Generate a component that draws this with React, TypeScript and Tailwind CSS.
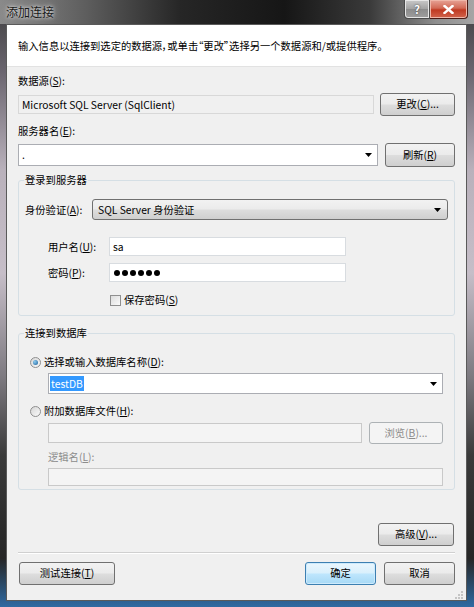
import React from 'react'

const font = "font-['Noto_Sans_CJK_SC',sans-serif]"

const U = ({ children }: { children: React.ReactNode }) => <span className="underline underline-offset-1">{children}</span>

const Arrow = () => (
  <svg width="7" height="4" viewBox="0 0 7 4" className="shrink-0">
    <path d="M0 0h7L3.5 4z" fill="#000" />
  </svg>
)

type BtnProps = { children: React.ReactNode; w: string; h?: string; primary?: boolean; disabled?: boolean }

const WinButton = ({ children, w, h = 'h-[23px]', primary, disabled }: BtnProps) => {
  let cls = 'border-[#707070] bg-[linear-gradient(#f2f2f2_0%,#ebebeb_48%,#dddddd_52%,#cfcfcf_100%)] text-black'
  if (primary) cls = 'border-[#3c7fb1] bg-[linear-gradient(#eaf6fd_0%,#d9f0fc_48%,#bee6fd_52%,#a7d9f5_100%)] text-black shadow-[inset_0_0_0_1px_#cdeafc]'
  if (disabled) cls = 'border-[#adb2b5] bg-[#f4f4f4] text-[#8c8c8c]'
  return (
    <button className={`${w} ${h} shrink-0 rounded-[3px] border text-[10.3px] leading-none flex items-center justify-center ${cls}`}>
      {children}
    </button>
  )
}

const Checkbox = () => (
  <span className="w-[11px] h-[11px] border border-[#8f8f8f] bg-[linear-gradient(135deg,#dcdcdc,#fbfbfb)] shrink-0" />
)

const Radio = ({ checked }: { checked?: boolean }) => (
  <span className="w-[11px] h-[11px] rounded-full border border-[#8f8f8f] bg-[linear-gradient(135deg,#d6d6d6,#fafafa)] flex items-center justify-center shrink-0">
    {checked && <span className="w-[5px] h-[5px] rounded-full bg-[radial-gradient(circle_at_35%_35%,#8ccbf0,#1b5f99)]" />}
  </span>
)

export default function App() {
  return (
    <div className={`${font} w-[474px] h-[607px] flex flex-col bg-[linear-gradient(#3d3d3d_0%,#6b6670_12%,#b9b1bb_28%,#c6bec8_45%,#7d7a80_62%,#3a3a3a_75%,#262626_92%,#2f6aa2_100%)] select-none [font-feature-settings:'palt']`}>
      {/* title bar */}
      <div className="h-[24px] flex items-start justify-between bg-[linear-gradient(to_right,#8a8a8a_0%,#5e5e5e_18%,#262626_38%,#161616_60%,#3a3a3a_78%,#8e8e8e_92%,#a5a5a5_100%)]">
        <span className="text-[12px] leading-none text-[#1a1a1a] pl-[6px] pt-[6px] [text-shadow:0_0_6px_#d8d8d8,0_0_3px_#e6e6e6]">添加连接</span>
        <div className="flex mr-[6px]">
          <div className="w-[26px] h-[19px] rounded-bl-[4px] border border-t-0 border-[#4b4b4b] bg-[linear-gradient(#c9c9c9_0%,#a3a3a3_48%,#8c8c8c_52%,#9e9e9e_100%)] shadow-[inset_0_0_0_1px_#e6e6e6] flex items-center justify-center text-white text-[11px] font-bold [text-shadow:0_0_2px_#333]">?</div>
          <div className="w-[38px] h-[19px] rounded-br-[4px] border border-l-0 border-t-0 border-[#4b1a14] bg-[linear-gradient(#e7a396_0%,#d26a56_45%,#c03a22_55%,#d2644c_100%)] shadow-[inset_0_0_0_1px_#efb6a8] flex items-center justify-center">
            <svg width="11" height="9" viewBox="0 0 11 9">
              <path d="M1.5 1l8 7M9.5 1l-8 7" stroke="#fff" strokeWidth="2.4" strokeLinecap="square" />
            </svg>
          </div>
        </div>
      </div>

      {/* client area */}
      <div className="flex-1 ml-[6px] mr-[7px] mb-[6px] border border-[#5a5a5a] bg-[#f0f0f0] flex flex-col text-[10.3px] leading-[14px] text-black">
        <div className="h-[42px] bg-white border-b border-[#e2e2e2] flex items-center pl-[11px] pt-[1px]">
          输入信息以连接到选定的数据源，或单击“更改”选择另一个数据源和/或提供程序。
        </div>

        <div className="flex flex-col px-[11px]">
          <div className="mt-[7px]">数据源(<U>S</U>):</div>
          <div className="mt-[5px] flex items-center gap-[6px] h-[23px]">
            <div className="w-[356px] h-[19px] border border-[#d8d8d8] bg-[#f0f0f0] flex items-center pl-[3px]">Microsoft SQL Server (SqlClient)</div>
            <WinButton w="w-[75px]">更改(<U>C</U>)...</WinButton>
          </div>

          <div className="mt-[8px]">服务器名(<U>E</U>):</div>
          <div className="mt-[5px] flex items-center gap-[7px] h-[24px]">
            <div className="w-[360px] h-[22px] border border-[#abadb3] bg-white flex items-center justify-between pl-[3px] pr-[5px]">
              <span>.</span>
              <Arrow />
            </div>
            <WinButton w="w-[70px]" h="h-[24px]">刷新(<U>R</U>)</WinButton>
          </div>

          <fieldset className="mt-[6px] border border-[#d5dfe5] rounded-[3px] px-[6px] pb-[8px]">
            <legend className="-ml-[1px] px-[1px]">登录到服务器</legend>
            <div className="mt-[12px] flex items-center h-[21px]">
              <span className="w-[67px] shrink-0">身份验证(<U>A</U>):</span>
              <div className="flex-1 h-[21px] rounded-[3px] border border-[#707070] bg-[linear-gradient(#f2f2f2_0%,#ebebeb_48%,#dddddd_52%,#cfcfcf_100%)] flex items-center justify-between pl-[5px] pr-[6px]">
                <span>SQL Server 身份验证</span>
                <Arrow />
              </div>
            </div>
            <div className="mt-[17px] flex items-center h-[19px] pl-[23px]">
              <span className="w-[61px] shrink-0">用户名(<U>U</U>):</span>
              <div className="w-[237px] h-[19px] border border-[#d8dce0] bg-white flex items-center pl-[3px]">sa</div>
            </div>
            <div className="mt-[7px] flex items-center h-[19px] pl-[23px]">
              <span className="w-[61px] shrink-0">密码(<U>P</U>):</span>
              <div className="w-[237px] h-[19px] border border-[#d8dce0] bg-white flex items-center pl-[4px] gap-[2px]">
                {[0, 1, 2, 3, 4, 5].map(i => (
                  <span key={i} className="w-[6px] h-[6px] rounded-full bg-black" />
                ))}
              </div>
            </div>
            <div className="mt-[11px] flex items-center gap-[3px] h-[14px] pl-[85px]">
              <Checkbox />
              <span>保存密码(<U>S</U>)</span>
            </div>
          </fieldset>

          <fieldset className="mt-[10px] border border-[#d5dfe5] rounded-[3px] pl-[11px] pr-[11px] pb-[3px]">
            <legend className="-ml-[6px] px-[1px]">连接到数据库</legend>
            <div className="mt-[15px] flex items-center gap-[3px] h-[14px]">
              <Radio checked />
              <span>选择或输入数据库名称(<U>D</U>):</span>
            </div>
            <div className="mt-[4px] ml-[18px] h-[21px] border border-[#abadb3] bg-white flex items-center justify-between pl-[1px] pr-[5px]">
              <span className="bg-[#3399ff] text-white px-[1px] leading-[15px]">testDB</span>
              <Arrow />
            </div>
            <div className="mt-[10px] flex items-center gap-[3px] h-[14px]">
              <Radio />
              <span>附加数据库文件(<U>H</U>):</span>
            </div>
            <div className="mt-[4px] ml-[18px] flex items-center gap-[7px] h-[22px]">
              <div className="flex-1 h-[20px] border border-[#c9c9c9] bg-[#f4f4f4]" />
              <WinButton w="w-[74px]" h="h-[22px]" disabled>浏览(<U>B</U>)...</WinButton>
            </div>
            <div className="mt-[6px] ml-[18px] text-[#8c8c8c]">逻辑名(<U>L</U>):</div>
            <div className="mt-[4px] ml-[18px] h-[18px] border border-[#c9c9c9] bg-[#f4f4f4]" />
          </fieldset>

          <div className="mt-[33px] flex justify-end pr-[1px]">
            <WinButton w="w-[76px]">高级(<U>V</U>)...</WinButton>
          </div>

          <div className="mt-[6px] border-t border-[#d0d0d0] border-b border-b-white" />

          <div className="mt-[8px] flex items-center">
            <div className="ml-[1px]">
              <WinButton w="w-[96px]">测试连接(<U>T</U>)</WinButton>
            </div>
            <div className="ml-auto flex gap-[8px]">
              <WinButton w="w-[71px]" primary>确定</WinButton>
              <WinButton w="w-[71px]">取消</WinButton>
            </div>
          </div>

          <div className="mt-[6px] flex justify-end -mr-[8px]">
            <svg width="8" height="8" viewBox="0 0 8 8">
              <g fill="#c4c4c4">
                <rect x="6" y="0" width="2" height="2" />
                <rect x="3" y="3" width="2" height="2" />
                <rect x="6" y="3" width="2" height="2" />
                <rect x="0" y="6" width="2" height="2" />
                <rect x="3" y="6" width="2" height="2" />
                <rect x="6" y="6" width="2" height="2" />
              </g>
            </svg>
          </div>
        </div>
      </div>
    </div>
  )
}
